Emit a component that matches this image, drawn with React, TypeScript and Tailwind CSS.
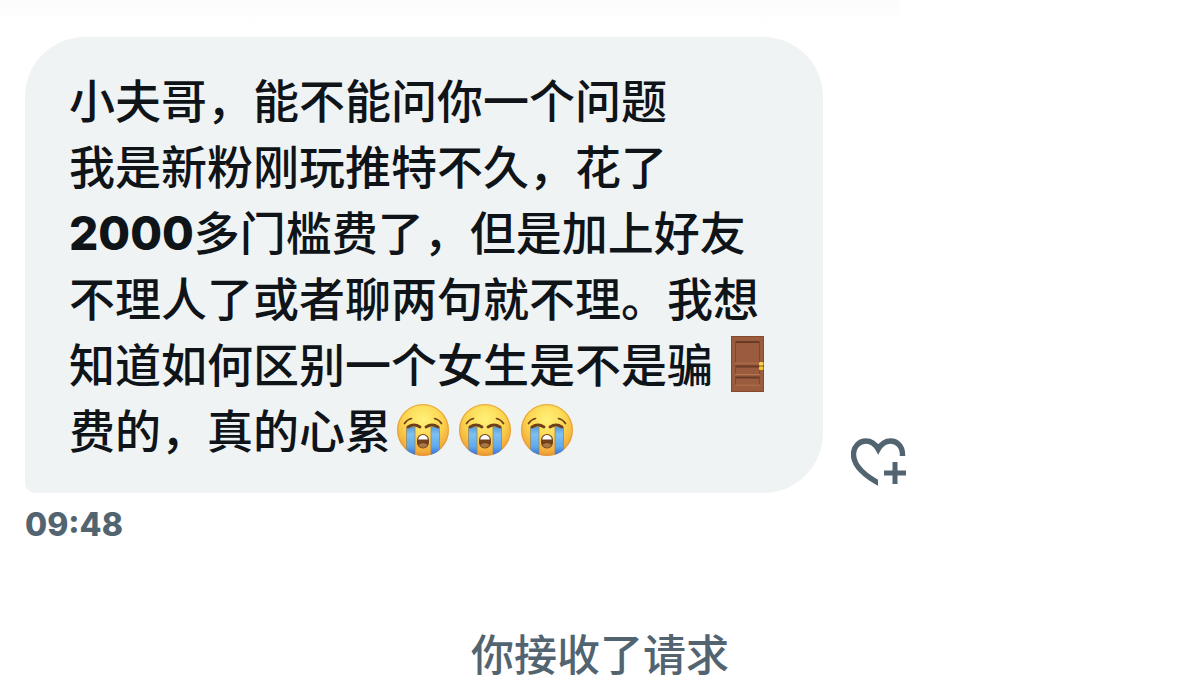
import type { ReactNode } from "react";

const CryingFace = () => (
  <svg
    viewBox="0 0 62 54"
    className="inline-block h-[54px] w-[62px] align-[-9px]"
    role="img"
    aria-label="😭"
  >
    <defs>
      <radialGradient id="face" cx="0.5" cy="0.3" r="0.72">
        <stop offset="0" stopColor="#fff27a" />
        <stop offset="0.5" stopColor="#fcd650" />
        <stop offset="0.85" stopColor="#f3ac3a" />
        <stop offset="1" stopColor="#e58b2c" />
      </radialGradient>
      <linearGradient id="tears" x1="0" y1="0" x2="0" y2="1">
        <stop offset="0" stopColor="#5b9fd8" />
        <stop offset="0.25" stopColor="#7fc0f2" />
        <stop offset="0.65" stopColor="#5fa9ec" />
        <stop offset="1" stopColor="#2c62d4" />
      </linearGradient>
      <clipPath id="faceClip">
        <circle cx="32" cy="27" r="26" />
      </clipPath>
    </defs>
    <circle cx="32" cy="27" r="26" fill="url(#face)" />
    <circle cx="32" cy="27" r="25.3" fill="none" stroke="#e29a3c" strokeWidth="1.2" opacity="0.7" />
    <g clipPath="url(#faceClip)">
      <path d="M15.5 24H24v30h-8.5zM40 24h8.500v30H40z" fill="url(#tears)" />
      <path d="M15.5 24v30M24 24v30M40 24v30M48.5 24v30" stroke="#8f8a66" strokeWidth="0.8" />
    </g>
    <g fill="none" stroke="#70401b" strokeLinecap="round">
      <path d="M13.5 20.5q2.500-4 7-5M50.500 20.500q-2.500-4-7-5" strokeWidth="1.700" />
      <path d="M17 24q6-4 12 0M47 24q-6-4-12 0" strokeWidth="2.800" />
    </g>
    <rect x="26" y="31" width="12" height="14.500" rx="6" fill="#72401b" />
    <path d="M27.500 42c2-2.300 7-2.300 9 0-2 3.500-7 3.500-9 0z" fill="#a97846" />
    <path d="M27.200 36.500c.5-6 9.100-6 9.600 0z" fill="#fff" />
  </svg>
);

const Door = () => (
  <svg
    viewBox="0 0 62 56"
    className="inline-block h-[56px] w-[62px] align-[-10px]"
    role="img"
    aria-label="🚪"
  >
    <rect x="18" y="0" width="33" height="56" rx="0.8" fill="#9a5c3d" />
    <rect x="18.5" y="0.5" width="32" height="55" fill="none" stroke="#84492f" />
    <g fill="#9a5b3e">
      <rect x="22" y="5" width="25" height="22" />
      <rect x="22" y="29.5" width="25" height="8.5" />
      <rect x="22" y="40.5" width="25" height="8.5" />
    </g>
    <path d="M22 6h25M22 30.500h25M22 41.500h25" stroke="#6b3a27" strokeWidth="2.200" />
    <path d="M22.500 5v21.500M46.500 5v21.500M22.500 30v8M46.500 30v8M22.500 41v8M46.500 41v8" stroke="#7e4930" />
    <path d="M22 27.200h25M22 38.500h25M22 49.200h25" stroke="#b47855" strokeWidth="0.9" />
    <rect x="46" y="26" width="4" height="8.500" rx="1" fill="#936518" />
    <rect x="46" y="26" width="4.500" height="3.500" rx="1.200" fill="#f6d24c" />
    <rect x="46" y="30.500" width="4.500" height="3.500" rx="1.200" fill="#f3c82f" />
  </svg>
);

const HeartPlus = () => (
  <svg viewBox="1 0 56 50" className="h-[50px] w-14" fill="none" stroke="currentColor" aria-hidden="true">
    <clipPath id="heartCut">
      <path d="M0 0h57v19H28v31H0z" />
    </clipPath>
    <path
      d="M34 49C13 38.500 3.500 28.500 3.500 17.500 3.500 9 9.500 4 16 4c5 0 9 2.500 12.200 8.200C31.500 6.500 35.500 4 40.500 4c6.500 0 12 5 12 13.500V22"
      strokeWidth="5.4"
      clipPath="url(#heartCut)"
    />
    <path d="M45 25v22M34 36h22" strokeWidth="5" />
  </svg>
);

const Bubble = ({ children }: { children: ReactNode }) => (
  <div className="w-[798px] rounded-[60px] rounded-bl-[10px] bg-[#eff3f4] px-11 pt-7 pb-8">
    <p className="text-[46px] leading-[66px] font-medium text-[#0f1419]">{children}</p>
  </div>
);

const App = () => {
  return (
    <main className="min-h-screen bg-white font-['Noto_Sans_CJK_SC',sans-serif]">
      <div className="h-6 w-3/4 bg-linear-to-b from-[#fcfcfc] to-white" />

      <div className="flex flex-col pt-[13px] pl-[25px]">
        <div className="flex items-end gap-7">
          <Bubble>
            小夫哥，能不能问你一个问题
            <br />
            我是新粉刚玩推特不久，花了
            <span className="font-['Inter',sans-serif] leading-none font-extrabold">2000</span>
            多门槛费了，但是加上好友不理人了或者聊两句就不理。我想知道如何区别一个女生是不是骗
            <Door />
            费的，真的心累
            <CryingFace />
            <CryingFace />
            <CryingFace />
          </Bubble>
          <button type="button" aria-label="添加心情" className="mb-1.5 shrink-0 text-[#536471]">
            <HeartPlus />
          </button>
        </div>
        <time className="mt-3 font-['Inter',sans-serif] text-[32px] leading-10 font-extrabold text-[#536471]">
          09:48
        </time>
      </div>

      <p className="mt-19 text-center text-[43px] leading-[62px] font-medium text-[#536471]">你接收了请求</p>
    </main>
  );
};

export default App;
